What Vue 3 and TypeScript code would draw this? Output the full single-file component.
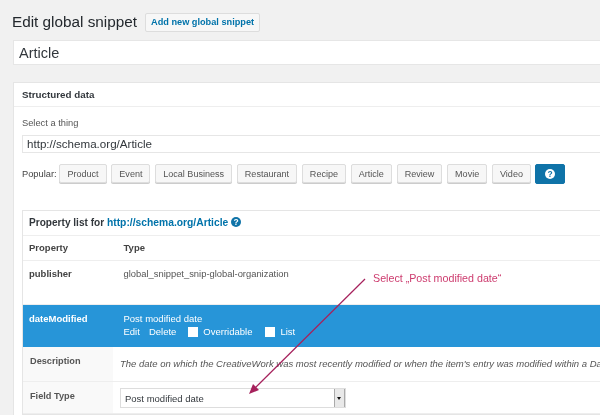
<template>
  <div class="page">
    <div class="head">
      <h1>Edit global snippet</h1>
      <a class="add-btn">Add new global snippet</a>
    </div>
    <div class="title-input">Article</div>

    <section class="box">
      <div class="box-title">Structured data</div>
      <div class="box-body">
        <div class="label">Select a thing</div>
        <div class="thing-input">http://schema.org/Article</div>
        <div class="popular">
          <span class="pop-label">Popular:</span>
          <button v-for="item in popular" :key="item" class="pop-btn">{{ item }}</button>
          <button class="help-btn">
            <svg width="10" height="10" viewBox="0 0 13 13">
              <circle cx="6.5" cy="6.5" r="6.5" fill="#fff" />
              <text x="6.5" y="10.3" text-anchor="middle" class="q q-blue">?</text>
            </svg>
          </button>
        </div>

        <div class="props">
          <div class="props-title">
            Property list for <a>http://schema.org/Article</a>
            <svg class="title-help" width="10" height="10" viewBox="0 0 13 13">
              <circle cx="6.5" cy="6.5" r="6.5" fill="#0f73a8" />
              <text x="6.5" y="10.3" text-anchor="middle" class="q q-white">?</text>
            </svg>
          </div>
          <div class="row row-head">
            <div class="col-a">Property</div>
            <div>Type</div>
          </div>
          <div class="row row-publisher">
            <div class="col-a">publisher</div>
            <div class="type">global_snippet_snip-global-organization</div>
          </div>
          <div class="row row-active">
            <div class="col-a">dateModified</div>
            <div class="active-body">
              <div>Post modified date</div>
              <div class="actions">
                <span>Edit</span>
                <span>Delete</span>
                <i class="check"></i>
                <span>Overridable</span>
                <i class="check second"></i>
                <span>List</span>
              </div>
            </div>
          </div>
          <div class="detail">
            <div class="detail-key">Description</div>
            <div class="detail-val desc">The date on which the CreativeWork was most recently modified or when the item's entry was modified within a DataFeed.</div>
          </div>
          <div class="detail">
            <div class="detail-key">Field Type</div>
            <div class="detail-val field">
              <div class="fake-select">
                <span>Post modified date</span>
                <span class="caret"></span>
              </div>
            </div>
          </div>
        </div>
      </div>
    </section>

    <div class="note">Select „Post modified date“</div>
    <svg class="arrow" width="130" height="125" viewBox="0 0 130 125">
      <line x1="118" y1="3" x2="7" y2="113" stroke="#a6215c" stroke-width="1.2" />
      <path d="M2 118 L6 108 L12 114 Z" fill="#a6215c" />
    </svg>
  </div>
</template>

<script setup lang="ts">
const popular: string[] = [
  'Product',
  'Event',
  'Local Business',
  'Restaurant',
  'Recipe',
  'Article',
  'Review',
  'Movie',
  'Video'
]
</script>

<style>
html,
body {
  margin: 0;
  background: #f1f1f1;
}
</style>

<style scoped>
.page {
  position: relative;
  width: 600px;
  height: 415px;
  overflow: hidden;
  background: #f1f1f1;
  padding: 12px 0 0 12px;
  box-sizing: border-box;
  font-family: 'Liberation Sans', Arial, sans-serif;
  font-size: 9.5px;
  color: #444;
  filter: blur(0.3px);
}
.head {
  display: flex;
  align-items: center;
  gap: 8px;
  height: 20px;
}
h1 {
  margin: 0;
  font-size: 15.3px;
  font-weight: 400;
  color: #23282d;
}
.add-btn {
  border: 1px solid #ddd;
  border-radius: 2px;
  background: #f7f7f7;
  color: #0073aa;
  font-weight: 700;
  font-size: 9.2px;
  line-height: 17px;
  padding: 0 5px;
}
.title-input {
  width: 620px;
  height: 25px;
  margin: 8px 0 0 1px;
  padding-left: 5px;
  border: 1px solid #e6e6e6;
  background: #fff;
  font-size: 14.5px;
  line-height: 24px;
  color: #32373c;
  box-sizing: border-box;
}
.box {
  width: 620px;
  margin: 17px 0 0 1px;
  border: 1px solid #e5e5e5;
  background: #fff;
  height: 360px;
  box-sizing: border-box;
}
.box-title {
  height: 23px;
  line-height: 23px;
  padding-left: 8px;
  border-bottom: 1px solid #eee;
  font-size: 9.8px;
  font-weight: 700;
  color: #32373c;
}
.box-body {
  padding: 10px 0 0 8px;
}
.label {
  line-height: 12px;
  font-size: 9.3px;
  color: #555;
}
.thing-input {
  height: 18px;
  margin-top: 6px;
  border: 1px solid #e6e6e6;
  border-right: 0;
  padding-left: 4px;
  font-size: 11.6px;
  line-height: 16px;
  color: #32373c;
  box-sizing: border-box;
}
.popular {
  display: flex;
  align-items: center;
  gap: 4.75px;
  margin-top: 11px;
  height: 19px;
}
.pop-label {
  margin-right: -2px;
  font-size: 9.3px;
}
.pop-btn {
  height: 19px;
  padding: 0 7px;
  border: 1px solid #ddd;
  border-radius: 2px;
  background: #f7f7f7;
  box-shadow: 0 1px 0 #ccc;
  font: 9.05px 'Liberation Sans', Arial, sans-serif;
  color: #555;
}
.help-btn {
  display: flex;
  align-items: center;
  justify-content: center;
  width: 30px;
  height: 20px;
  margin-left: -1px;
  padding: 0;
  border: 1px solid #0f73a8;
  border-radius: 2px;
  background: #0f73a8;
}
.q {
  font-family: 'Liberation Sans', Arial, sans-serif;
  font-size: 11px;
  font-weight: 700;
}
.q-blue {
  fill: #0f73a8;
}
.q-white {
  fill: #fff;
}
.props {
  margin-top: 27px;
  border: 1px solid #e5e5e5;
  border-right: 0;
}
.props-title {
  height: 24px;
  padding-left: 6px;
  border-bottom: 1px solid #eee;
  font-size: 10.1px;
  line-height: 24px;
  font-weight: 700;
  color: #32373c;
}
.props-title a {
  font-size: 10.3px;
  color: #0073aa;
}
.title-help {
  margin-left: 3px;
  vertical-align: -1px;
}
.row {
  display: flex;
  padding-left: 6px;
}
.col-a {
  flex: 0 0 94.5px;
  font-weight: 700;
}
.row-head {
  height: 24px;
  line-height: 24px;
  font-weight: 700;
  border-bottom: 1px solid #eee;
}
.row-publisher {
  height: 44px;
  padding-top: 7px;
  box-sizing: border-box;
  line-height: 12px;
  border-bottom: 1px solid #eee;
}
.type {
  font-size: 9.4px;
  color: #555;
}
.row-active {
  height: 42px;
  padding-top: 7px;
  box-sizing: border-box;
  background: #2795d8;
  color: #fff;
  line-height: 13px;
}
.actions {
  display: flex;
  align-items: center;
  gap: 9px;
}
.check {
  display: block;
  width: 10px;
  height: 10px;
  margin-left: 3px;
  margin-right: -4px;
  background: #fff;
}
.check.second {
  margin-left: 4px;
}
.detail {
  display: flex;
  border-bottom: 1px solid #eee;
}
.detail-key {
  flex: 0 0 83px;
  padding: 9px 0 0 7px;
  background: #f9f9f9;
  font-weight: 700;
  color: #555;
  font-size: 9.2px;
}
.detail-val {
  flex: 1;
  min-width: 0;
  height: 34px;
  padding-left: 7px;
  box-sizing: border-box;
}
.detail-val.field {
  height: 31px;
}
.desc {
  padding-top: 11px;
  font-style: italic;
  font-size: 9.5px;
  white-space: nowrap;
  color: #555;
}
.fake-select {
  display: flex;
  justify-content: space-between;
  width: 226px;
  height: 20px;
  margin-top: 6px;
  padding-left: 4px;
  border: 1px solid #ddd;
  box-sizing: border-box;
  line-height: 19px;
  color: #32373c;
}
.caret {
  position: relative;
  width: 9px;
  background: #e9e9e9;
  border-left: 1px solid #aaa;
  border-right: 1px solid #aaa;
}
.caret::after {
  content: '';
  position: absolute;
  top: 8px;
  left: 2px;
  border: 2.5px solid transparent;
  border-top: 3px solid #111;
  border-bottom: 0;
}
.note {
  position: absolute;
  left: 373px;
  top: 272px;
  font-size: 10.7px;
  line-height: 13px;
  color: #cd3b6e;
}
.arrow {
  position: absolute;
  left: 247px;
  top: 276px;
}
</style>
